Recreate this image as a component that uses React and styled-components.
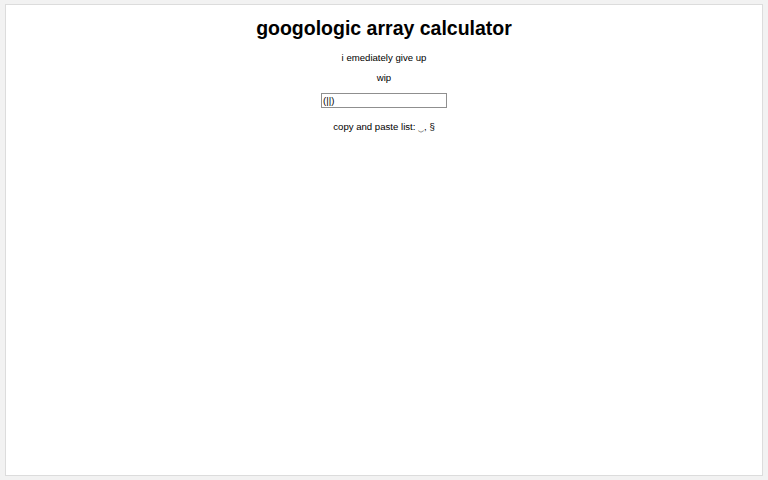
import React from "react";
import styled, { createGlobalStyle } from "styled-components";

const Global = createGlobalStyle`
  html, body { margin: 0; padding: 0; }
  body {
    background: #f2f2f2;
    font-family: "Liberation Sans", Arial, sans-serif;
  }
`;

const Page = styled.div`
  box-sizing: border-box;
  height: 480px;
  padding: 4px 5px 4px 5px;
`;

const Card = styled.main`
  box-sizing: border-box;
  height: 472px;
  background: #ffffff;
  border: 1px solid #dcdcdc;
  display: flex;
  flex-direction: column;
  align-items: center;
  color: #000;
`;

const Title = styled.h1`
  margin: 11px 0 0 0;
  font-size: 19.5px;
  line-height: 24px;
  font-weight: bold;
`;

const Line = styled.p`
  margin: ${(p) => p.$top}px 0 0 0;
  font-size: 9.6px;
  line-height: 12px;
`;

const Input = styled.input`
  box-sizing: border-box;
  margin-top: 9px;
  width: 126px;
  height: 15px;
  padding: 0 1px;
  border: 1px solid #8f8f8f;
  font-family: "Liberation Sans", Arial, sans-serif;
  font-size: 9.6px;
  color: #000;
  background: #fff;
  outline: none;
`;

export default function App() {
  return (
    <>
      <Global />
      <Page>
        <Card>
          <Title>googologic array calculator</Title>
          <Line $top={12}>i emediately give up</Line>
          <Line $top={8}>wip</Line>
          <Input defaultValue="(||)" />
          <Line $top={13}>copy and paste list: ‿, §</Line>
        </Card>
      </Page>
    </>
  );
}
